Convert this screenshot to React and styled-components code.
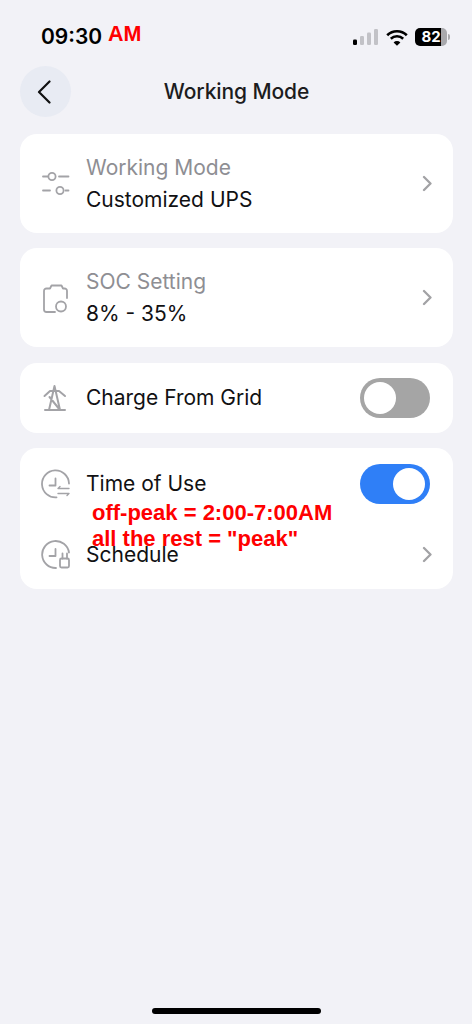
import React from 'react';
import styled, { createGlobalStyle } from 'styled-components';

const GlobalStyle = createGlobalStyle`
  html, body {
    margin: 0;
    padding: 0;
    background: #f2f2f7;
  }
  * { box-sizing: border-box; }
`;

const Page = styled.div`
  position: relative;
  width: 472px;
  height: 1024px;
  overflow: hidden;
  display: flex;
  flex-direction: column;
  background: #f2f2f7;
  color: #1c1c1e;
  font-family: Inter, "Liberation Sans", sans-serif;
`;

const StatusBar = styled.div`
  height: 66px;
  padding: 24px 22px 0 41px;
  display: flex;
  align-items: flex-start;
  justify-content: space-between;
`;

const Clock = styled.div`
  font-size: 21px;
  line-height: 26px;
  font-weight: 600;
  color: #000;
`;

const StatusIcons = styled.div`
  display: flex;
  align-items: center;
  gap: 7px;
  margin-top: 4px;
`;

const Battery = styled.div`
  width: 32px;
  height: 18px;
  border-radius: 5px;
  overflow: hidden;
  background: linear-gradient(90deg, #000 82%, #a9a9ad 82%);
  color: #fff;
  font-size: 15px;
  font-weight: 700;
  line-height: 18px;
  text-align: center;
`;

const BatteryWrap = styled.div`
  display: flex;
  align-items: center;
  gap: 1px;
`;

const BatteryCap = styled.div`
  width: 2px;
  height: 6px;
  border-radius: 0 2px 2px 0;
  background: #a9a9ad;
`;

const NavBar = styled.div`
  height: 51px;
  margin: 0 20px 17px;
  display: flex;
  align-items: center;
`;

const BackButton = styled.button`
  width: 51px;
  height: 51px;
  padding: 0 4px 0 0;
  border: 0;
  border-radius: 50%;
  background: #e8ebf3;
  display: flex;
  align-items: center;
  justify-content: center;
`;

const Title = styled.h1`
  flex: 1;
  margin: 0 0 0 -51px;
  padding-left: 1px;
  font-size: 21px;
  font-weight: 500;
  line-height: 26px;
  text-align: center;
  color: #1c1c1e;
  letter-spacing: -0.1px;
`;

const Cards = styled.div`
  display: flex;
  flex-direction: column;
  gap: 15px;
  padding: 0 19px 0 20px;
`;

const Card = styled.section`
  background: #fff;
  border-radius: 17px;
  padding: 0 22px;
  margin-bottom: ${(p) => p.$after || 0}px;
`;

const Row = styled.div`
  height: ${(p) => p.$height}px;
  display: flex;
  align-items: center;
`;

const IconSlot = styled.div`
  width: 45px;
  flex: none;
  display: flex;
  margin-left: -1px;
`;

const Texts = styled.div`
  flex: 1;
  display: flex;
  flex-direction: column;
  gap: 6px;
  margin-top: ${(p) => p.$top || 0}px;
`;

const Label = styled.div`
  font-size: 21px;
  line-height: 26px;
  color: #8e8e93;
`;

const Value = styled.div`
  font-size: 21px;
  line-height: 26px;
  color: #111113;
`;

const Track = styled.div`
  width: 70px;
  height: 40px;
  padding: 4px 5px 4px 4px;
  margin-right: 1px;
  border-radius: 20px;
  display: flex;
  justify-content: ${(p) => (p.$on ? 'flex-end' : 'flex-start')};
  background: ${(p) => (p.$on ? '#2f7ff7' : '#a5a5a5')};
`;

const Knob = styled.div`
  width: 32px;
  height: 32px;
  border-radius: 50%;
  background: #fff;
`;

const Note = styled.div`
  position: absolute;
  left: 92px;
  top: 500px;
  color: #ff0000;
  font-family: "Liberation Sans", Arial, sans-serif;
  font-size: 22px;
  font-weight: 700;
  line-height: 26px;
  white-space: pre;
  pointer-events: none;
`;

const AmNote = styled.div`
  position: absolute;
  left: 108px;
  top: 21px;
  color: #ff0000;
  font-family: "Liberation Sans", Arial, sans-serif;
  font-size: 21.5px;
  font-weight: 700;
  line-height: 26px;
`;

const HomeBar = styled.div`
  margin: auto auto 10px;
  width: 169px;
  height: 6px;
  border-radius: 3px;
  background: #000;
`;

function Chevron() {
  return (
    <svg width="10" height="17" viewBox="0 0 10 17" fill="none" stroke="#a2a2a5" strokeWidth="2.3" strokeLinecap="round" strokeLinejoin="round" style={{ marginRight: -1 }}>
      <path d="M2 2l6.5 6.5L2 15" />
    </svg>
  );
}

function Toggle({ on }) {
  return (
    <Track $on={on}>
      <Knob />
    </Track>
  );
}

const iconProps = {
  width: 30,
  height: 30,
  viewBox: '0 0 30 30',
  fill: 'none',
  stroke: '#a3a3a7',
  strokeWidth: 1.8,
  strokeLinecap: 'round',
  strokeLinejoin: 'round',
};

function SlidersIcon() {
  return (
    <svg {...iconProps}>
      <path d="M2 7.500h5M18 7.500h9.500M2 21.500h7M24.500 21.500h3" />
      <circle cx="11" cy="7.500" r="3.600" />
      <circle cx="19" cy="21.500" r="3.600" />
    </svg>
  );
}

function BatteryIcon() {
  return (
    <svg {...iconProps}>
      <path d="M14 29H5.500A2.500 2.500 0 0 1 3 26.500V8a2.500 2.500 0 0 1 2.500-2.500H9L10.500 2.500h10L22 5.500h1.500A2.500 2.500 0 0 1 26 8v7" />
      <circle cx="20" cy="23.500" r="5" />
    </svg>
  );
}

function TowerIcon() {
  return (
    <svg {...iconProps} strokeWidth="2">
      <path d="M13.500 3 8 27H4M13.500 3 19 27h5M3.500 13l5.500-5h9l6 5M8.500 14 19 27H8" />
    </svg>
  );
}

function ClockSlidersIcon() {
  return (
    <svg {...iconProps}>
      <path d="M28 14.500A13.500 13.500 0 1 0 15.500 28.400" />
      <path d="M14.500 9.500v7H8.500" />
      <path d="M17 19.500h11M19 17.500l-2 2M17 24.500h11M26 26.500l2-2" strokeWidth="1.400" />
    </svg>
  );
}

function ClockPlugIcon() {
  return (
    <svg {...iconProps}>
      <path d="M28 13.500A13.500 13.500 0 1 0 15 29" />
      <path d="M14.500 10v7H8.500" />
      <rect x="19" y="19.500" width="9" height="9" rx="1.500" />
      <path d="M21.500 19.500v-5M26 19.500v-5" />
    </svg>
  );
}

export default function App() {
  return (
    <Page>
      <GlobalStyle />
      <StatusBar>
        <Clock>09:30</Clock>
        <StatusIcons>
          <svg width="25" height="18" viewBox="0 0 25 18" style={{ marginRight: 1 }}>
            <rect x="0" y="11.500" width="4" height="5.500" rx="1.200" fill="#000" />
            <rect x="7" y="8" width="4" height="9" rx="1.200" fill="#c2c2c7" />
            <rect x="14" y="4.500" width="4" height="12.500" rx="1.200" fill="#c2c2c7" />
            <rect x="21" y="1" width="4" height="16" rx="1.200" fill="#c2c2c7" />
          </svg>
          <svg width="22" height="17" viewBox="0 0 22 17" fill="none" stroke="#000" strokeWidth="2.600">
            <path d="M1.200 6.200a14 14 0 0 1 19.600 0" />
            <path d="M4.800 9.800a9 9 0 0 1 12.400 0" />
            <path d="M11 16.800 7.600 13.400a4.800 4.800 0 0 1 6.800 0Z" fill="#000" stroke="none" />
          </svg>
          <BatteryWrap>
            <Battery>82</Battery>
            <BatteryCap />
          </BatteryWrap>
        </StatusIcons>
      </StatusBar>
      <AmNote>AM</AmNote>

      <NavBar>
        <BackButton aria-label="Back">
          <svg width="14" height="24" viewBox="0 0 14 24" fill="none" stroke="#111" strokeWidth="2.200" strokeLinecap="round" strokeLinejoin="round">
            <path d="M12.500 1.500 2 12l10.500 10.500" />
          </svg>
        </BackButton>
        <Title>Working Mode</Title>
      </NavBar>

      <Cards>
        <Card>
          <Row $height={99}>
            <IconSlot><SlidersIcon /></IconSlot>
            <Texts>
              <Label>Working Mode</Label>
              <Value>Customized UPS</Value>
            </Texts>
            <Chevron />
          </Row>
        </Card>
        <Card $after={1}>
          <Row $height={99}>
            <IconSlot><BatteryIcon /></IconSlot>
            <Texts>
              <Label>SOC Setting</Label>
              <Value>8% - 35%</Value>
            </Texts>
            <Chevron />
          </Row>
        </Card>
        <Card>
          <Row $height={70}>
            <IconSlot><TowerIcon /></IconSlot>
            <Texts><Value>Charge From Grid</Value></Texts>
            <Toggle />
          </Row>
        </Card>
        <Card>
          <Row $height={71}>
            <IconSlot><ClockSlidersIcon /></IconSlot>
            <Texts $top={1}><Value>Time of Use</Value></Texts>
            <Toggle on />
          </Row>
          <Row $height={70}>
            <IconSlot><ClockPlugIcon /></IconSlot>
            <Texts $top={1}><Value>Schedule</Value></Texts>
            <Chevron />
          </Row>
        </Card>
      </Cards>

      <Note>{'off-peak = 2:00-7:00AM\nall the rest = "peak"'}</Note>
      <HomeBar />
    </Page>
  );
}
